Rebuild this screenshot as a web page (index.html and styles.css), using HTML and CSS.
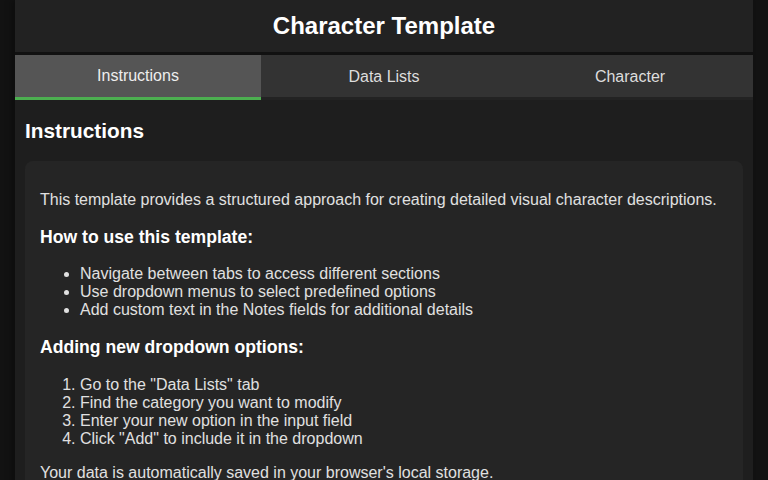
FILE: index.html
```html
<!DOCTYPE html>
<html lang="en">
<head>
<meta charset="utf-8">
<title>Character Template</title>
<link rel="stylesheet" href="styles.css">
</head>
<body>
<div class="container">
  <header class="header">
    <h1>Character Template</h1>
  </header>
  <nav class="tabs">
    <div class="tab active">Instructions</div>
    <div class="tab">Data Lists</div>
    <div class="tab">Character</div>
  </nav>
  <main class="content">
    <h2>Instructions</h2>
    <section class="card">
      <p>This template provides a structured approach for creating detailed visual character descriptions.</p>
      <h3>How to use this template:</h3>
      <ul>
        <li>Navigate between tabs to access different sections</li>
        <li>Use dropdown menus to select predefined options</li>
        <li>Add custom text in the Notes fields for additional details</li>
      </ul>
      <h3>Adding new dropdown options:</h3>
      <ol>
        <li>Go to the "Data Lists" tab</li>
        <li>Find the category you want to modify</li>
        <li>Enter your new option in the input field</li>
        <li>Click "Add" to include it in the dropdown</li>
      </ol>
      <p>Your data is automatically saved in your browser's local storage.</p>
    </section>
  </main>
</div>
</body>
</html>
```
FILE: styles.css
```css
html, body {
  margin: 0;
  padding: 0;
  background: #121212;
  color: #e0e0e0;
  font-family: "Liberation Sans", Arial, sans-serif;
  font-size: 16px;
  height: 100%;
  overflow: hidden;
}
.container {
  margin: 0 15px;
  background: #1e1e1e;
  min-height: 100%;
  box-shadow: -4px 0 6px rgba(0,0,0,0.25);
}
.header {
  background: #222222;
  height: 52px;
  display: flex;
  align-items: center;
  justify-content: center;
  border-bottom: 3px solid #111111;
}
.header h1 {
  margin: 0;
  font-size: 24px;
  font-weight: bold;
  color: #ffffff;
}
.tabs {
  display: flex;
  background: #333333;
}
.tab {
  flex: 1;
  text-align: center;
  padding: 13px 0 11px;
  color: #dddddd;
  border-bottom: 3px solid #232323;
}
.tab.active {
  background: #555555;
  color: #eeeeee;
  border-bottom-color: #4caf50;
  padding: 12px 0 12px;
}
.content {
  padding: 19px 10px 10px;
}
.content h2 {
  margin: 0 0 18px;
  font-size: 20.8px;
  color: #ffffff;
}
.card {
  background: #252525;
  border-radius: 8px;
  padding: 14px 15px;
}
.card p {
  margin: 16px 0;
}
.card h3 {
  margin: 18px 0 10px;
  font-size: 17.6px;
  color: #ffffff;
}
.card ul {
  margin: 16.5px 0;
  padding-left: 40px;
}
.card ol {
  margin: 18.5px 0 16px;
  padding-left: 40px;
}
```
